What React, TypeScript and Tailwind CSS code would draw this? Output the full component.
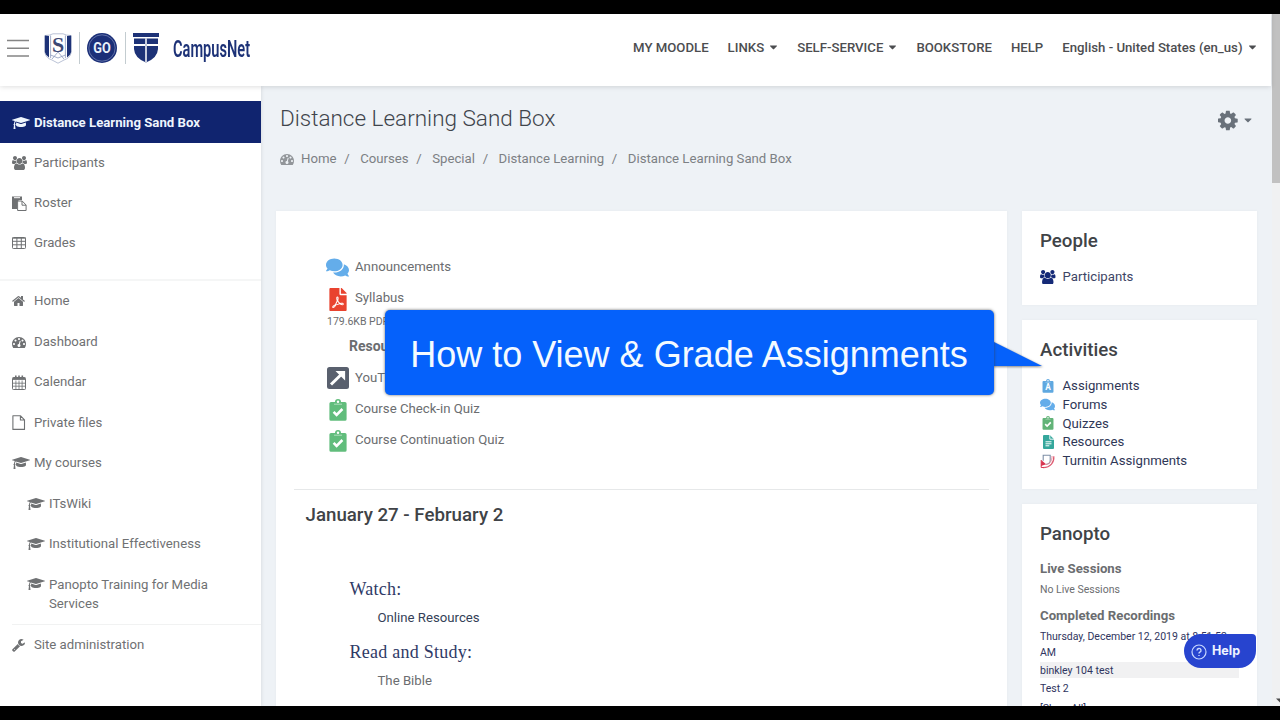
import type { ReactNode } from 'react'
import { FaCaretDown, FaComments, FaFilePdf } from 'react-icons/fa'

const glyphs = {
  group: {
    w: 1920,
    d: 'M593 896q-162 5-265 128h-134q-82 0-138-40.5t-56-118.5q0-353 124-353 6 0 43.5 21t97.5 42.5 119 21.5q67 0 133-23-5 37-5 66 0 139 81 256zm1071 637q0 120-73 189.5t-194 69.5h-874q-121 0-194-69.5t-73-189.5q0-53 3.5-103.5t14-109 26.5-108.5 43-97.5 62-81 85.5-53.5 111.5-20q10 0 43 21.5t73 48 107 48 135 21.5 135-21.5 107-48 73-48 43-21.5q61 0 111.5 20t85.5 53.5 62 81 43 97.5 26.5 108.5 14 109 3.5 103.5zm-1024-1277q0 106-75 181t-181 75-181-75-75-181 75-181 181-75 181 75 75 181zm704 384q0 159-112.5 271.5t-271.5 112.5-271.5-112.5-112.5-271.5 112.5-271.5 271.5-112.5 271.5 112.5 112.5 271.5zm576 225q0 78-56 118.5t-138 40.5h-134q-103-123-265-128 81-117 81-256 0-29-5-66 66 23 133 23 59 0 119-21.5t97.5-42.5 43.5-21q124 0 124 353zm-128-609q0 106-75 181t-181 75-181-75-75-181 75-181 181-75 181 75 75 181z',
  },
  cap: {
    w: 2304,
    d: 'M1774 836l18 316q4 69-82 128t-235 93.5-323 34.5-323-34.5-235-93.5-82-128l18-316 574 181q22 7 48 7t48-7zm530-324q0 23-22 31l-1120 352q-4 1-10 1t-10-1l-652-206q-43 34-71 111.5t-34 178.5q63 36 63 109 0 69-58 107l58 433q2 14-8 25-9 11-24 11h-192q-15 0-24-11-10-11-8-25l58-433q-58-38-58-107 0-73 65-111 11-207 98-330l-333-104q-22-8-22-31t22-31l1120-352q4-1 10-1t10 1l1120 352q22 8 22 31z',
  },
  home: {
    w: 1664,
    d: 'M1408 992v480q0 26-19 45t-45 19h-384v-384h-256v384h-384q-26 0-45-19t-19-45v-480q0-1 .5-3t.5-3l575-474 575 474q1 2 1 6zm223-69l-62 74q-8 9-21 11h-3q-13 0-21-7l-692-577-692 577q-12 8-24 7-13-2-21-11l-62-74q-8-10-7-23.5t11-21.5l719-599q32-26 76-26t76 26l244 204v-195q0-14 9-23t23-9h192q14 0 23 9t9 23v408l219 182q10 8 11 21.5t-7 23.5z',
  },
  gauge: {
    w: 1792,
    d: 'M384 1152q0-53-37.5-90.5t-90.5-37.5-90.5 37.5-37.5 90.5 37.5 90.5 90.5 37.5 90.5-37.5 37.5-90.5zm192-448q0-53-37.5-90.5t-90.5-37.5-90.5 37.5-37.5 90.5 37.5 90.5 90.5 37.5 90.5-37.5 37.5-90.5zm428 481l101-382q6-26-7.5-48.5t-38.5-29.5-48 6.5-30 39.5l-101 382q-60 5-107 43.5t-63 98.5q-20 77 20 146t117 89 146-20 89-117q16-60-6-117t-72-91zm660-33q0-53-37.5-90.5t-90.5-37.5-90.5 37.5-37.5 90.5 37.5 90.5 90.5 37.5 90.5-37.5 37.5-90.5zm-640-640q0-53-37.5-90.5t-90.5-37.5-90.5 37.5-37.5 90.5 37.5 90.5 90.5 37.5 90.5-37.5 37.5-90.5zm448 192q0-53-37.5-90.5t-90.5-37.5-90.5 37.5-37.5 90.5 37.5 90.5 90.5 37.5 90.5-37.5 37.5-90.5zm320 448q0 261-141 483-19 29-54 29h-1402q-35 0-54-29-141-221-141-483 0-182 71-348t191-286 286-191 348-71 348 71 286 191 191 286 71 348z',
  },
  wrench: {
    w: 1664,
    d: 'M384 1472q0-26-19-45t-45-19-45 19-19 45 19 45 45 19 45-19 19-45zm644-420l-682 682q-37 37-90 37-52 0-91-37l-106-108q-38-36-38-90 0-53 38-91l681-681q39 98 114.5 173.5t173.5 114.5zm634-435q0 39-23 106-47 134-164.5 217.5t-258.5 83.5q-185 0-316.5-131.5t-131.5-316.5 131.5-316.5 316.5-131.5q58 0 121.5 16.5t107.5 46.5q16 11 16 28t-16 28l-293 169v224l193 107q5-3 79-48.5t135.5-81 70.5-35.5q15 0 23.5 10t8.5 25z',
  },
  cog: {
    w: 1536,
    d: 'M1024 896q0-106-75-181t-181-75-181 75-75 181 75 181 181 75 181-75 75-181zm512-109v222q0 12-8 23t-20 13l-185 28q-19 54-39 91 35 50 107 138 10 12 10 25t-9 23q-27 37-99 108t-94 71q-12 0-26-9l-138-108q-44 23-91 38-16 136-29 186-7 28-36 28h-222q-14 0-24.5-8.5t-11.5-21.5l-28-184q-49-16-90-37l-141 107q-10 9-25 9-14 0-25-11-126-114-165-168-7-10-7-23 0-12 8-23 15-21 51-66.5t54-70.5q-27-50-41-99l-183-27q-13-2-21-12.5t-8-23.5v-222q0-12 8-23t19-13l186-28q14-46 39-92-40-57-107-138-10-12-10-24 0-10 9-23 26-36 98.5-107.5t94.5-71.5q13 0 26 10l138 107q44-23 91-38 16-136 29-186 7-28 36-28h222q14 0 24.5 8.5t11.5 21.5l28 184q49 16 90 37l142-107q9-9 24-9 13 0 25 10 129 119 165 170 7 8 7 22 0 12-8 23-15 21-51 66.5t-54 70.5q26 50 41 98l183 28q13 2 21 12.5t8 23.5z',
  },
}

function Glyph({ name, className = 'h-3.5' }: { name: keyof typeof glyphs; className?: string }) {
  return (
    <svg viewBox={`0 0 ${glyphs[name].w} 1792`} className={`w-auto shrink-0 ${className}`} fill="currentColor">
      <path d={glyphs[name].d} />
    </svg>
  )
}

const PasteIcon = () => (
  <svg viewBox="0 0 15 15" className="h-[15px] w-[15px]" fill="none" stroke="currentColor">
    <path d="M0 .5h10V4H7L5 6v7H0z" fill="currentColor" stroke="none" />
    <path d="M2 1.7h6" stroke="#fff" />
    <path d="M5.6 5h4.6l3.9 4v5.5H5.6zM10 5v4.2h4" />
  </svg>
)

const TableIcon = () => (
  <svg viewBox="0 0 14 12" className="h-3 w-3.5" fill="none" stroke="currentColor">
    <rect x=".5" y=".5" width="13" height="11" rx=".8" />
    <path d="M0 1.2h14M0 4.3h14M0 7.8h14M4.9 1v11M9.3 1v11" />
  </svg>
)

const CalendarIcon = () => (
  <svg viewBox="0 0 14 15" className="h-[15px] w-3.5" fill="none" stroke="currentColor">
    <rect x=".5" y="2.5" width="13" height="12" rx=".8" />
    <path d="M1 3.7h12" strokeWidth="2.4" />
    <path d="M3.8 .6v3M7 .6v3M10.3 .6v3" strokeWidth="1.6" />
    <path d="M1 8.2h12M1 11.2h12M3.9 5.5v9M7 5.5v9M10.1 5.5v9" strokeWidth=".8" />
  </svg>
)

const FileIcon = () => (
  <svg viewBox="0 0 14 15" className="h-[15px] w-3.5" fill="none" stroke="currentColor" strokeWidth="1.1">
    <path d="M.9.8h7.7l3.9 4v9.6H.9zM8.4 1v4h4" strokeLinejoin="round" />
  </svg>
)

function Clipboard({ kind, className }: { kind: 'check' | 'letter'; className: string }) {
  return (
    <svg viewBox="0 0 18 22" className={className} fill="currentColor">
      <path d="M2 3h4a3 3 0 0 1 6 0h4a1.6 1.6 0 0 1 1.6 1.6v15.6A1.6 1.6 0 0 1 16 21.8H2A1.6 1.6 0 0 1 .4 20.2V4.6A1.6 1.6 0 0 1 2 3z" />
      <circle cx="9" cy="2.8" r="1.2" fill="#fff" />
      <path d="M5 5.2h8" stroke="#fff" strokeOpacity=".5" />
      {kind === 'check' ? (
        <path d="M4.6 12.8l3 3L13.4 10" fill="none" stroke="#fff" strokeWidth="2.6" />
      ) : (
        <text x="9" y="18" textAnchor="middle" fontSize="13" fontWeight="700" fontFamily="Roboto, sans-serif" fill="#fff">A</text>
      )}
    </svg>
  )
}

const LinkIcon = () => (
  <svg viewBox="0 0 22 22" className="h-[22px] w-[22px]">
    <rect width="22" height="22" rx="2.5" fill="#59606e" />
    <path d="M4 17.5L14.5 7.2" stroke="#fff" strokeWidth="3" />
    <path d="M8.5 4h9.6v9.6z" fill="#fff" />
  </svg>
)

const ResourceIcon = () => (
  <svg viewBox="0 0 11 14" className="h-3.5 w-[11px]">
    <path d="M0 1a1 1 0 0 1 1-1h5.8L11 4.2V13a1 1 0 0 1-1 1H1a1 1 0 0 1-1-1z" fill="#35a79c" />
    <path d="M6.8 0v4.2H11" fill="none" stroke="#fff" strokeWidth=".9" />
    <path d="M2.5 6.8h6M2.5 8.8h6M2.5 10.8h3.8" stroke="#fff" />
  </svg>
)

const TurnitinIcon = () => (
  <svg viewBox="0 0 15 15" className="h-[15px] w-[15px]" fill="none">
    <path d="M3.2 6.8V1.2h7v5c0 2.2-1.6 3.8-4 4" stroke="#7d8fa6" strokeWidth="1.1" />
    <path d="M13.8 2.2c.5 6.2-3 11-10.8 11.5" stroke="#dd5a70" strokeWidth="1.2" />
    <path d="M12 2c.2 4.8-2 7.8-6.2 8.6" stroke="#e58494" strokeWidth=".9" />
    <path d="M1.4 6.2l4.8 4.1-5.2 1.7z" fill="#d8344f" />
    <path d="M1.2 6v7.5h2.6" stroke="#d8344f" />
  </svg>
)

const nav = [
  { label: 'MY MOODLE' },
  { label: 'LINKS', menu: true },
  { label: 'SELF-SERVICE', menu: true },
  { label: 'BOOKSTORE' },
  { label: 'HELP' },
  { label: 'English - United States (en_us)', menu: true },
]

function Header() {
  return (
    <header className="relative z-10 flex h-[72px] w-[1271px] shrink-0 items-start justify-between bg-white pt-[17px] shadow-[0_1px_5px_rgba(0,0,0,0.13)]">
      <div className="flex h-[34px] items-center">
        <svg viewBox="0 0 22 18" className="ml-[7px] h-[18px] w-[22px]" stroke="#858585" strokeWidth="1.6">
          <path d="M0 1.5h22M0 9.3h22M0 17h22" />
        </svg>

        {/* University crest */}
        <svg viewBox="0 0 28 31" className="ml-[15px] h-[31px] w-7">
          <path d="M1 2.5Q6 2.5 9 .8H19Q22 2.5 27 2.5V20Q26 25 20 27L14 30.2 8 27Q2 25 1 20z" fill="#fff" stroke="#a8b2cb" strokeWidth=".8" />
          <path d="M.8 2.5l4.2.4V24.5Q1.5 22 .8 19zM27.2 2.5l-4.2.4V24.5q3.5-2.5 4.2-5.5z" fill="#1d3277" />
          <path d="M6.6 2.5V25M21.4 2.5V25M6.6 22l7.4 3 7.4-3M8 26l6-7 6 7" fill="none" stroke="#8c99bd" strokeWidth=".8" />
          <text x="14.2" y="19" textAnchor="middle" fontSize="22" fontWeight="700" fontFamily="Liberation Serif, serif" fill="#3c4874">S</text>
        </svg>

        <div className="ml-[7px] h-8 w-px bg-[#c3ccd0]" />

        <svg viewBox="0 0 32 32" className="ml-[6px] h-8 w-8">
          <circle cx="16" cy="16" r="15" fill="#1b2f78" />
          <circle cx="16" cy="16" r="13.2" fill="none" stroke="#8b9ac6" strokeWidth=".6" />
          <text x="16" y="21" textAnchor="middle" fontSize="14" fontWeight="700" fontFamily="Roboto, sans-serif" fill="#e9f1fa" textLength="17.5" lengthAdjust="spacingAndGlyphs">GO</text>
        </svg>

        <div className="ml-[7px] h-8 w-px bg-[#c3ccd0]" />

        <svg viewBox="0 0 26 30" className="ml-[7px] h-[30px] w-[26px]">
          <path d="M0 0h26v4H0zM1 5.5h24V16q-.5 9-12 13.5Q1.500 25 1 16z" fill="#1d3277" />
          <path d="M13 5v25M0 12h26" stroke="#fff" strokeWidth="2" />
          <path d="M13 5v25" stroke="#1d3277" strokeWidth=".5" />
        </svg>

        <div className="ml-[13.5px] w-20 pt-[3px]">
          <span className="inline-block origin-left scale-x-[0.635] text-[23px] leading-[34px] font-semibold text-[#1d3277]">CampusNet</span>
        </div>
      </div>

      <nav className="mr-[14.5px] flex h-[33px] items-center gap-[19px] text-[13.2px] font-medium text-[#4c4d50]">
        {nav.map((item) => (
          <a key={item.label} className="flex items-center whitespace-nowrap">
            {item.label}
            {item.menu && <FaCaretDown className="ml-[5px] h-3 w-[9px]" />}
          </a>
        ))}
      </nav>
    </header>
  )
}

function SideItem({ icon, children, className = 'h-[40.5px]' }: { icon: ReactNode; children: ReactNode; className?: string }) {
  return (
    <a className={`flex items-center pl-3 ${className}`}>
      <span className="w-[22px] shrink-0">{icon}</span>
      {children}
    </a>
  )
}

function Sidebar() {
  return (
    <aside className="w-[261px] shrink-0 bg-white pt-[15px] text-[13.2px] text-[#6f7173] shadow-[1px_0_3px_rgba(0,0,0,0.08)]">
      <SideItem icon={<Glyph name="cap" />} className="h-[42px] bg-[#10246f] pt-px font-bold text-[#eef5fd]">Distance Learning Sand Box</SideItem>
      <SideItem icon={<Glyph name="group" />} className="h-10">Participants</SideItem>
      <SideItem icon={<PasteIcon />} className="h-10">Roster</SideItem>
      <SideItem icon={<TableIcon />}>Grades</SideItem>

      <div className="mt-[15.5px] border-t-2 border-[#f5f6f6]" />

      <SideItem icon={<Glyph name="home" />}>Home</SideItem>
      <SideItem icon={<Glyph name="gauge" />}>Dashboard</SideItem>
      <SideItem icon={<CalendarIcon />}>Calendar</SideItem>
      <SideItem icon={<FileIcon />}>Private files</SideItem>
      <SideItem icon={<Glyph name="cap" />}>My courses</SideItem>
      <div className="pl-[15px]">
        <SideItem icon={<Glyph name="cap" />}>ITsWiki</SideItem>
        <SideItem icon={<Glyph name="cap" />}>Institutional Effectiveness</SideItem>
        <a className="flex h-[59.5px] pt-2.5 pl-3 leading-[19px]">
          <span className="w-[22px] shrink-0 pt-0.5"><Glyph name="cap" /></span>
          <span className="w-[170px]">Panopto Training for Media Services</span>
        </a>
      </div>
      <div className="ml-3 border-t border-[#f1f2f2]" />
      <SideItem icon={<Glyph name="wrench" />}>Site administration</SideItem>
    </aside>
  )
}

const crumbs = ['Home', 'Courses', 'Special', 'Distance Learning', 'Distance Learning Sand Box']

function PageHeading() {
  return (
    <div className="flex h-[125px] justify-between pl-[19px]">
      <div>
        <h1 className="mt-[17px] text-[22.5px] leading-[30px] font-light text-[#3f454c]">Distance Learning Sand Box</h1>
        <div className="mt-4 flex items-center text-[13.2px] leading-5 text-[#7c8084]">
          <Glyph name="gauge" className="mr-[7px] h-3.5 opacity-80" />
          {crumbs.map((c, i) => (
            <span key={c} className="flex">
              {i > 0 && <span className="mr-[10.5px] ml-[7.7px]">/</span>}
              {c}
            </span>
          ))}
        </div>
      </div>
      <div className="mt-[23px] mr-5 flex h-[22px] items-center text-[#69717a]">
        <Glyph name="cog" className="h-[23px]" />
        <FaCaretDown className="ml-1.5 h-3 w-2" />
      </div>
    </div>
  )
}

function Activity({ icon, children }: { icon: ReactNode; children: ReactNode }) {
  return (
    <a className="flex h-[31.4px] items-center">
      <span className="flex w-7 shrink-0 pt-0.5">{icon}</span>
      {children}
    </a>
  )
}

function Content() {
  return (
    <main className="h-[520px] w-[731px] shrink-0 bg-white px-[18px] pt-10 text-[13.2px] text-[#6b6d70] shadow-[0_0_3px_rgba(0,0,0,0.04)]">
      <div className="pl-[33px]">
        <Activity icon={<FaComments className="-ml-px h-[23px] w-[23px] text-[#64adea]" />}>Announcements</Activity>
        <Activity icon={<FaFilePdf className="ml-0.5 h-[23px] w-[18px] text-[#e9432f]" />}>Syllabus</Activity>
        <p className="h-4 text-[10.5px] leading-[15px]">179.6KB PDF document</p>
        <p className="ml-[22px] h-8 text-[14px] leading-[32px] font-bold">Resources</p>
        <Activity icon={<LinkIcon />}>YouTube Channel</Activity>
        <Activity icon={<Clipboard kind="check" className="ml-0.5 h-[22px] w-[18px] text-[#61bd7c]" />}>Course Check-in Quiz</Activity>
        <Activity icon={<Clipboard kind="check" className="ml-0.5 h-[22px] w-[18px] text-[#61bd7c]" />}>Course Continuation Quiz</Activity>
      </div>

      <div className="mt-[33px] border-t border-[#e6e8e9]" />

      <h2 className="mt-[13px] ml-[11.5px] text-[18.72px] leading-6 font-medium text-[#404347]">January 27 - February 2</h2>

      <div className="mt-[50px] ml-[55.5px]">
        <h3 className="font-['Liberation_Serif',serif] text-[18px] leading-6 tracking-[0.25px] text-[#2f3a66]">Watch:</h3>
        <p className="mt-[7px] ml-7 leading-5 text-[#353f58]">Online Resources</p>
        <h3 className="mt-3 font-['Liberation_Serif',serif] text-[18px] leading-6 tracking-[0.25px] text-[#2f3a66]">Read and Study:</h3>
        <p className="mt-[7px] ml-7 leading-5">The Bible</p>
      </div>
    </main>
  )
}

function Block({ title, className, children }: { title: string; className: string; children: ReactNode }) {
  return (
    <section className={`w-[235px] bg-white px-[18px] pt-[18px] shadow-[0_0_3px_rgba(0,0,0,0.04)] ${className}`}>
      <h2 className="text-[18.72px] leading-6 font-medium text-[#404347]">{title}</h2>
      {children}
    </section>
  )
}

const activities = [
  { label: 'Assignments', icon: <Clipboard kind="letter" className="ml-0.5 h-3.5 w-3 text-[#5fa8e0]" /> },
  { label: 'Forums', icon: <FaComments className="h-[15px] w-[15px] text-[#64adea]" /> },
  { label: 'Quizzes', icon: <Clipboard kind="check" className="ml-0.5 h-3.5 w-3 text-[#61b377]" /> },
  { label: 'Resources', icon: <span className="ml-[3px]"><ResourceIcon /></span> },
  { label: 'Turnitin Assignments', icon: <TurnitinIcon /> },
]

function Blocks() {
  return (
    <div className="flex flex-col gap-[15px]">
      <Block title="People" className="h-[94px]">
        <a className="mt-[14px] flex h-5 items-center text-[13.2px] text-[#3d4565]">
          <span className="w-[22.5px] text-[#152a77]"><Glyph name="group" className="h-[14.5px]" /></span>
          Participants
        </a>
      </Block>

      <Block title="Activities" className="h-[169px]">
        <div className="mt-[14.5px] text-[13.2px] text-[#2f3757]">
          {activities.map((a) => (
            <a key={a.label} className="flex h-[18.8px] items-center">
              <span className="flex w-[22.5px] shrink-0">{a.icon}</span>
              {a.label}
            </a>
          ))}
        </div>
      </Block>

      <Block title="Panopto" className="h-60">
        <h3 className="mt-[13px] text-[13.2px] leading-5 font-bold text-[#6b6d70]">Live Sessions</h3>
        <p className="mt-[3px] text-[10.5px] leading-4 text-[#6b6d70]">No Live Sessions</p>
        <h3 className="mt-2 text-[13.2px] leading-5 font-bold text-[#6b6d70]">Completed Recordings</h3>
        <div className="text-[10.5px] leading-[15.5px] text-[#2f3560]">
          <p className="mt-[3px] h-[33px]">Thursday, December 12, 2019 at 8:51:53 AM</p>
          <p className="bg-[#f1f1f2] pt-px leading-[15px]">binkley 104 test</p>
          <p className="mt-[3px]">Test 2</p>
          <p className="mt-1">[Show All]</p>
        </div>
      </Block>
    </div>
  )
}

export default function App() {
  return (
    <div className="relative flex h-[720px] w-[1280px] flex-col overflow-hidden bg-black py-3.5 font-['Roboto',sans-serif]">
      <div className="flex min-h-0 flex-1 overflow-hidden bg-[#eef2f6]">
        <div className="flex w-[1272px] shrink-0 flex-col">
          <Header />
          <div className="flex min-h-0 flex-1">
            <Sidebar />
            <div className="flex-1">
              <PageHeading />
              <div className="flex items-start gap-[15px] pl-[15px]">
                <Content />
                <Blocks />
              </div>
            </div>
          </div>
        </div>

        {/* Scrollbar */}
        <div className="flex flex-1 flex-col justify-between bg-[#f0f1f2]">
          <div className="h-[169px] bg-[#c1c1c1]" />
          <svg viewBox="0 0 8 10" className="h-2.5 w-2">
            <path d="M4 2.5h4V6.5z" fill="#4a4a4a" />
          </svg>
        </div>
      </div>

      {/* Callout over the page */}
      <svg viewBox="0 0 52 32" className="absolute top-[338px] left-[992px] z-20 h-8 w-[52px] drop-shadow-[1px_1px_1px_rgba(60,60,60,0.6)]">
        <path d="M0 3L50 28H0z" fill="#0561fb" />
      </svg>
      <div className="absolute top-[310px] left-[385px] z-20 flex h-[85px] w-[609px] items-center justify-center rounded-[5px] bg-[#0561fb] pt-[5px] pr-px font-['Liberation_Sans',sans-serif] text-[36px] whitespace-nowrap text-[#f4faff] shadow-[0_0_3px_rgba(60,60,60,0.8)]">
        How to View &amp; Grade Assignments
      </div>

      {/* Support launcher */}
      <button className="absolute top-[634px] left-[1184px] z-20 flex h-[34px] w-[72px] items-center rounded-[17px] rounded-tr-[4px] bg-[#2744cf] pt-px pl-[7px] font-['Inter',sans-serif] text-[12.5px] font-bold text-[#eef3ff]">
        <svg viewBox="0 0 16 16" className="mr-[5px] h-4 w-4" fill="none" stroke="#c9d8ff" strokeWidth="1.2">
          <circle cx="8" cy="8" r="7" />
          <path d="M6 6.4a2 2 0 1 1 2.9 1.8c-.7.4-.9.7-.9 1.4M8 10.9v1.2" strokeWidth="1.4" />
        </svg>
        Help
      </button>
    </div>
  )
}
